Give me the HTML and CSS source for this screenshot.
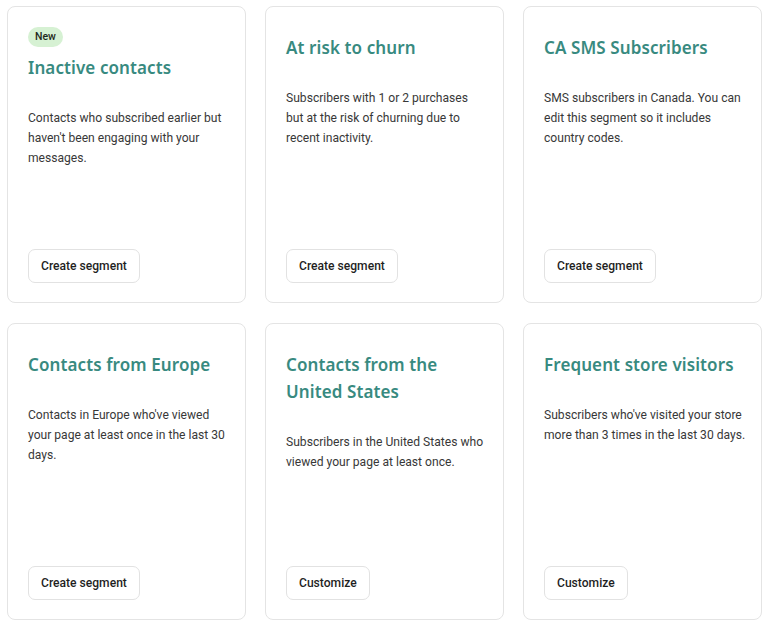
FILE: index.html
```html
<!DOCTYPE html>
<html lang="en">
<head>
<meta charset="utf-8">
<title>Segments</title>
<link rel="stylesheet" href="styles.css">
</head>
<body>
<main class="grid">
  <section class="card">
    <span class="badge">New</span>
    <h2 class="title">Inactive contacts</h2>
    <p class="desc">Contacts who subscribed earlier but haven't been engaging with your messages.</p>
    <button class="btn">Create segment</button>
  </section>
  <section class="card">
    <h2 class="title">At risk to churn</h2>
    <p class="desc">Subscribers with 1 or 2 purchases but at the risk of churning due to recent inactivity.</p>
    <button class="btn">Create segment</button>
  </section>
  <section class="card">
    <h2 class="title">CA SMS Subscribers</h2>
    <p class="desc">SMS subscribers in Canada. You can edit this segment so it includes country codes.</p>
    <button class="btn">Create segment</button>
  </section>
  <section class="card">
    <h2 class="title">Contacts from Europe</h2>
    <p class="desc">Contacts in Europe who've viewed your page at least once in the last 30 days.</p>
    <button class="btn">Create segment</button>
  </section>
  <section class="card">
    <h2 class="title">Contacts from the United States</h2>
    <p class="desc">Subscribers in the United States who viewed your page at least once.</p>
    <button class="btn">Customize</button>
  </section>
  <section class="card">
    <h2 class="title">Frequent store visitors</h2>
    <p class="desc">Subscribers who've visited your store more than 3 times in the last 30 days.</p>
    <button class="btn">Customize</button>
  </section>
</main>
</body>
</html>
```
FILE: styles.css
```css
* { box-sizing: border-box; }
html, body { background: #ffffff; }
body {
  margin: 0;
  padding: 6px 6px 0 7px;
  font-family: Roboto, "Liberation Sans", sans-serif;
  color: #3b3b3b;
}
.grid {
  display: grid;
  grid-template-columns: repeat(3, 239px);
  grid-auto-rows: 297px;
  column-gap: 19px;
  row-gap: 20px;
}
.card {
  border: 1px solid #e4e4e4;
  border-radius: 8px;
  padding: 20px 15px 19px 20px;
  display: flex;
  flex-direction: column;
  align-items: flex-start;
}
.badge {
  display: inline-block;
  height: 20px;
  line-height: 20px;
  padding: 0 7px;
  border-radius: 10px;
  background: #d6f1d3;
  color: #1f2a20;
  font-size: 10.5px;
  font-weight: 500;
}
.title {
  margin: 7px 0 0 0;
  font-family: "Noto Sans", Inter, sans-serif;
  font-size: 17px;
  font-weight: 600;
  line-height: 27px;
  color: #388a80;
  letter-spacing: 0.1px;
}
.desc {
  margin: 27px 0 0 0;
  font-size: 12.1px;
  line-height: 20px;
  color: #383838;
}
.btn {
  margin-top: auto;
  height: 34px;
  padding: 0 12px;
  border: 1px solid #e2e2e2;
  border-radius: 7px;
  background: #ffffff;
  font-family: Roboto, "Liberation Sans", sans-serif;
  font-size: 12.1px;
  font-weight: 500;
  color: #1f1f1f;
  cursor: pointer;
}
```
